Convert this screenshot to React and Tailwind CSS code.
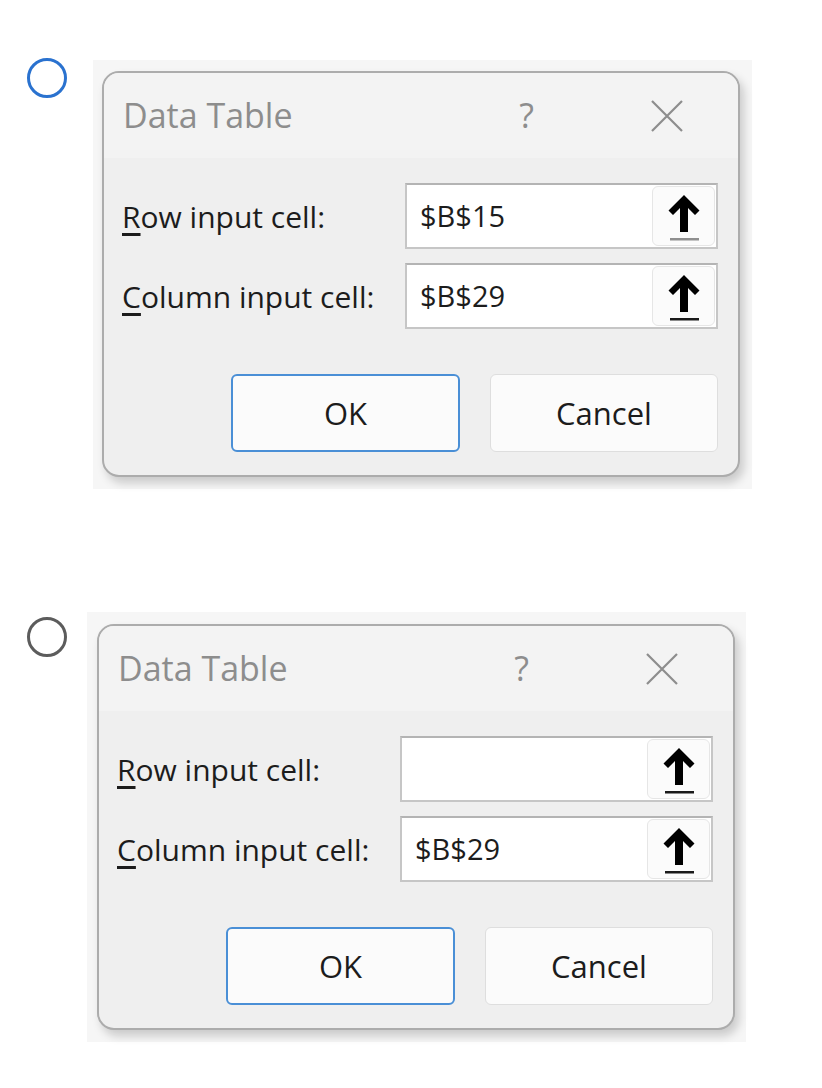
import React from 'react'

const FONT = { fontFamily: '"Open Sans", "Noto Sans", sans-serif' }

function ArrowIcon({ line = '#8f8f8f' }) {
  return (
    <svg width="32" height="46" viewBox="0 0 32 46">
      <path d="M16 0 L31.5 15.5 L27 20 L20 13 L20 37 L12 37 L12 13 L5 20 L0.5 15.5 Z" fill="#000" />
      <rect x="2" y="43" width="29" height="2.5" fill={line} />
    </svg>
  )
}

function CellField({ value, line }) {
  return (
    <div className="flex h-[66px] w-[313px] items-stretch border-2 border-[#c6c6c6] border-t-[#b4b4b4] bg-white">
      <div className="flex flex-1 items-center pl-[13px] text-[29px] text-[#1c1c1c]">{value}</div>
      <div className="my-[1px] mr-[1px] flex w-[63px] items-center justify-center rounded-[6px] border border-[#e6e6e6] bg-[#fbfbfb] pt-[4px]">
        <ArrowIcon line={line} />
      </div>
    </div>
  )
}

function DataTableDialog({ row, column, rowLine, colLine }) {
  return (
    <div className="w-[638px] overflow-hidden rounded-[17px] border-2 border-[#acacac] bg-[#efefef] shadow-[4px_6px_10px_rgba(0,0,0,0.18)]" style={FONT}>
      {/* title bar */}
      <div className="flex h-[85px] items-center bg-[#f3f3f3] pl-[19px] pr-[55px]">
        <span className="flex-1 text-[34px] text-[#8d8d8d]">Data Table</span>
        <span className="mr-[117px] text-[34px] text-[#8d8d8d]">?</span>
        <svg width="32" height="32" viewBox="0 0 32 32">
          <path d="M1 1 L31 31 M31 1 L1 31" stroke="#8d8d8d" strokeWidth="2.2" />
        </svg>
      </div>

      {/* body */}
      <div className="pl-[18px] pr-[20px] pt-[25px] pb-[23px]">
        <div className="grid grid-cols-[283px_1fr] items-center gap-y-[14px] text-[30px] text-[#1c1c1c]">
          <span><u className="underline-offset-[5px]">R</u>ow input cell:</span>
          <CellField value={row} line={rowLine} />
          <span><u className="underline-offset-[5px]">C</u>olumn input cell:</span>
          <CellField value={column} line={colLine} />
        </div>

        <div className="mt-[45px] flex justify-end gap-[30px]">
          <button className="h-[78px] w-[229px] rounded-[6px] border-2 border-[#4a8fd6] bg-[#fbfbfb] text-[31px] text-[#1c1c1c]">OK</button>
          <button className="h-[78px] w-[228px] rounded-[6px] border border-[#dedede] bg-[#fbfbfb] text-[31px] text-[#1c1c1c]">Cancel</button>
        </div>
      </div>
    </div>
  )
}

export default function App() {
  return (
    <div className="h-[1088px] w-[822px] bg-white">
      {/* option 1 */}
      <div className="flex items-start pt-[58px]">
        <div className="ml-[27px] h-[40px] w-[40px] shrink-0 rounded-full border-[3px] border-[#2a72cf]" />
        <div className="ml-[26px] mt-[2px] bg-[#f6f6f6] pb-[12px] pl-[9px] pr-[12px] pt-[11px]">
          <DataTableDialog row="$B$15" column="$B$29" rowLine="#8f8f8f" colLine="#1a1a1a" />
        </div>
      </div>

      {/* option 2 */}
      <div className="mt-[123px] flex items-start">
        <div className="ml-[27px] mt-[5px] h-[40px] w-[40px] shrink-0 rounded-full border-[3px] border-[#5c5c5c]" />
        <div className="ml-[20px] bg-[#f6f6f6] pb-[12px] pl-[10px] pr-[11px] pt-[12px]">
          <DataTableDialog row="" column="$B$29" rowLine="#1a1a1a" colLine="#1a1a1a" />
        </div>
      </div>
    </div>
  )
}
